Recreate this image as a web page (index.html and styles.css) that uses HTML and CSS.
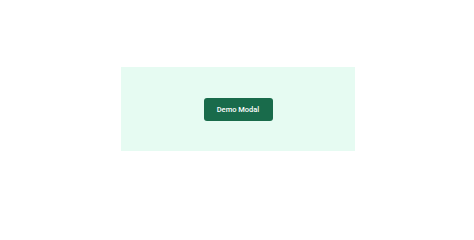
FILE: index.html
```html
<!DOCTYPE html>
<html lang="en">
<head>
<meta charset="utf-8">
<title>Demo Modal</title>
<link rel="stylesheet" href="styles.css">
</head>
<body>
<main class="page">
  <section class="panel">
    <button class="demo-btn" type="button">Demo Modal</button>
  </section>
</main>
</body>
</html>
```
FILE: styles.css
```css
html, body {
  margin: 0;
  padding: 0;
  background: #ffffff;
}
.page {
  width: 474px;
  height: 218px;
  display: flex;
  align-items: center;
  justify-content: center;
  box-sizing: border-box;
  padding-left: 2px;
}
.panel {
  width: 234px;
  height: 84px;
  background: #e6fbf2;
  display: flex;
  align-items: center;
  justify-content: center;
}
.demo-btn {
  font-family: Roboto, "Liberation Sans", Arial, sans-serif;
  font-size: 7.5px;
  font-weight: 500;
  color: #ffffff;
  background: #196b4b;
  border: 0;
  border-radius: 3px;
  width: 69px;
  height: 23px;
  padding: 0;
  display: flex;
  align-items: center;
  justify-content: center;
}
```
